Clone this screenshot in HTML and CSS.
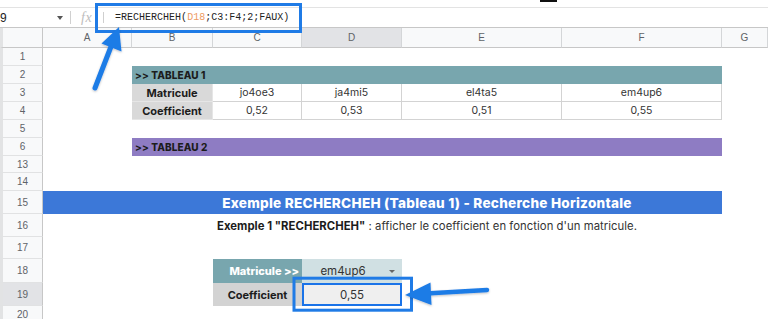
FILE: index.html
```html
<!DOCTYPE html>
<html lang="fr">
<head>
<meta charset="utf-8">
<title>RECHERCHEH</title>
<link rel="stylesheet" href="styles.css">
</head>
<body>
<div class="app">
  <div class="top"><span class="blk"></span></div>
  <div class="fbar">
    <div class="namebox">9</div>
    <span class="caret"></span>
    <span class="vsep"></span>
    <span class="fx">fx</span>
    <span class="vsep2"></span>
    <div class="formula">=RECHERCHEH(<span class="ref">D18</span>;C3:F4;2;FAUX)</div>
  </div>
  <div class="sheet">
    <div class="row colhdr">
      <div class="ch corner"></div>
      <div class="ch">A</div>
      <div class="ch">B</div>
      <div class="ch">C</div>
      <div class="ch sel">D</div>
      <div class="ch">E</div>
      <div class="ch">F</div>
      <div class="ch">G</div>
    </div>
    <div class="row h18"><div class="rh">1</div></div>
    <div class="row h18"><div class="rh">2</div><div class="bar teal span-bf">&gt;&gt; TABLEAU 1</div></div>
    <div class="row h18">
      <div class="rh">3</div>
      <div class="c lbl colb">Matricule</div>
      <div class="c val">jo4oe3</div>
      <div class="c val">ja4mi5</div>
      <div class="c val">el4ta5</div>
      <div class="c val">em4up6</div>
    </div>
    <div class="row h18">
      <div class="rh">4</div>
      <div class="c lbl colb">Coefficient</div>
      <div class="c val">0,52</div>
      <div class="c val">0,53</div>
      <div class="c val">0,51</div>
      <div class="c val">0,55</div>
    </div>
    <div class="row h18"><div class="rh">5</div></div>
    <div class="row h18"><div class="rh">6</div><div class="bar purple span-bf">&gt;&gt; TABLEAU 2</div></div>
    <div class="row h17"><div class="rh">13</div></div>
    <div class="row h18"><div class="rh">14</div></div>
    <div class="row h23"><div class="rh">15</div><div class="title span-af">Exemple RECHERCHEH (Tableau 1) - Recherche Horizontale</div></div>
    <div class="row h23"><div class="rh">16</div><div class="desc span-bf"><b>Exemple 1 "RECHERCHEH"</b> : afficher le coefficient en fonction d'un matricule.</div></div>
    <div class="row h22"><div class="rh">17</div></div>
    <div class="row h24">
      <div class="rh">18</div>
      <div class="c2 mat colc">Matricule &gt;&gt;</div>
      <div class="c2 pick">em4up6<span class="dd"></span></div>
    </div>
    <div class="row h23">
      <div class="rh sel">19</div>
      <div class="c2 coef colc">Coefficient</div>
      <div class="c2 res">0,55</div>
    </div>
    <div class="row h18"><div class="rh">20</div></div>
  </div>
  <svg class="annot" width="768" height="319" viewBox="0 0 768 319">
    <defs>
      <filter id="sh" x="-20%" y="-20%" width="140%" height="140%">
        <feDropShadow dx="0" dy="1" stdDeviation="1" flood-color="#000" flood-opacity="0.25"/>
      </filter>
    </defs>
    <rect x="96.5" y="4.5" width="204" height="27" fill="none" stroke="#1f7be6" stroke-width="3"/>
    <rect x="294" y="278.2" width="117.5" height="32" fill="none" stroke="#1f7be6" stroke-width="3"/>
    <g filter="url(#sh)" fill="#1f7be6">
      <line x1="95" y1="88" x2="112" y2="44" stroke="#1f7be6" stroke-width="5" stroke-linecap="round"/>
      <polygon points="119,27 101.5,43.5 121.5,51.5"/>
      <line x1="487" y1="290" x2="426" y2="293.5" stroke="#1f7be6" stroke-width="4.5" stroke-linecap="round"/>
      <polygon points="405,295 430.5,282.5 431.5,305"/>
    </g>
  </svg>
</div>
</body>
</html>
```
FILE: styles.css
```css
* { box-sizing: border-box; }
html, body { margin: 0; padding: 0; background: #fff; }
body { width: 768px; height: 319px; overflow: hidden; font-family: "Liberation Sans", Roboto, Arial, sans-serif; }
.app { position: relative; width: 768px; height: 319px; overflow: hidden; }

.top { height: 8px; border-bottom: 1px solid #e3e3e3; position: relative; }
.blk { display: block; width: 17px; height: 2px; margin-left: 540px; background: #111; }

.fbar { height: 20px; display: flex; align-items: center; border-bottom: 1px solid #c7c7c7; }
.namebox { width: 56px; font-size: 12px; color: #222; padding-left: 0; }
.caret { width: 0; height: 0; border-left: 3.5px solid transparent; border-right: 3.5px solid transparent; border-top: 4px solid #555; margin-left: 1px; }
.vsep { width: 1px; height: 13px; background: #d0d0d0; margin-left: 7px; }
.fx { font-family: "Liberation Serif", serif; font-style: italic; font-size: 14px; color: #bdbdbd; margin-left: 10px; letter-spacing: 0.5px; }
.vsep2 { width: 1px; height: 11px; background: #cfcfcf; margin-left: 11px; }
.formula { font-family: "Liberation Mono", "DejaVu Sans Mono", monospace; font-size: 10px; color: #222; margin-left: 11px; }
.ref { color: #ee9a5f; }

.sheet { display: flex; flex-direction: column; }
.row { display: grid; grid-template-columns: 43px 89px 81px 89px 100px 160px 160px 1fr; }
.colhdr { height: 20px; }
.h17 { height: 17px; }
.h18 { height: 18px; }
.h22 { height: 22px; }
.h23 { height: 23px; }
.h24 { height: 24px; }

.ch { background: #f8f9fa; border-right: 1px solid #d4d6d8; border-bottom: 1px solid #c7c7c7; font-size: 10px; color: #5f6368; display: flex; align-items: center; justify-content: center; }
.ch.corner { border-left: 3px solid #e2e3e4; border-right: 1px solid #c7c7c7; }
.ch.sel { background: #e2e3e6; }
.rh { grid-column: 1; background: #f8f9fa; border-left: 3px solid #e2e3e4; border-right: 1px solid #c7c7c7; border-bottom: 1px solid #e1e2e3; font-size: 10px; color: #5f6368; display: flex; align-items: center; justify-content: center; }
.rh.sel { background: #e2e3e6; }

.span-bf { grid-column: 3 / 8; }
.span-af { grid-column: 2 / 8; }
.colb { grid-column: 3; }
.colc { grid-column: 4; }

.bar { font-family: Inter, "Open Sans", sans-serif; font-weight: 800; font-size: 10px; color: #1c1c1c; display: flex; align-items: center; padding-left: 3px; letter-spacing: 0.1px; }
.teal { background: #78a6ae; }
.purple { background: #8e7cc3; }

.c { border-right: 1px solid #d3d3d3; border-bottom: 1px solid #d3d3d3; font-family: Inter, "Open Sans", sans-serif; font-size: 10.5px; color: #333; display: flex; align-items: center; justify-content: center; }
.c.lbl { background: #d9d9d9; font-weight: 700; color: #1c1c1c; font-size: 11px; border-right-color: #e6e6e6; border-bottom-color: #e6e6e6; }

.title { background: #3c78d8; color: #fff; font-family: Inter, "Open Sans", sans-serif; font-weight: 800; font-size: 13.6px; letter-spacing: 0.25px; display: flex; align-items: center; justify-content: center; padding-left: 89px; }
.desc { font-family: Inter, "Open Sans", sans-serif; font-size: 11.3px; letter-spacing: 0.05px; color: #333; display: flex; align-items: center; justify-content: center; white-space: pre; }
.desc b { font-weight: 700; color: #1c1c1c; }

.c2 { font-family: Inter, "Open Sans", sans-serif; font-size: 11px; display: flex; align-items: center; }
.mat { background: #78a6ae; color: #fff; font-weight: 800; justify-content: flex-end; padding-right: 3px; }
.pick { background: #d0e0e3; color: #333; justify-content: center; padding-right: 18px; position: relative; font-size: 11.5px; }
.dd { position: absolute; right: 7px; top: 11px; width: 0; height: 0; border-left: 3px solid transparent; border-right: 3px solid transparent; border-top: 3px solid #666; }
.coef { background: #d3d3d3; color: #1c1c1c; font-weight: 700; justify-content: center; }
.res { background: #efefef; color: #333; justify-content: center; border: 2px solid #1a73e8; font-size: 11.5px; }

.annot { position: absolute; left: 0; top: 0; pointer-events: none; }
```
